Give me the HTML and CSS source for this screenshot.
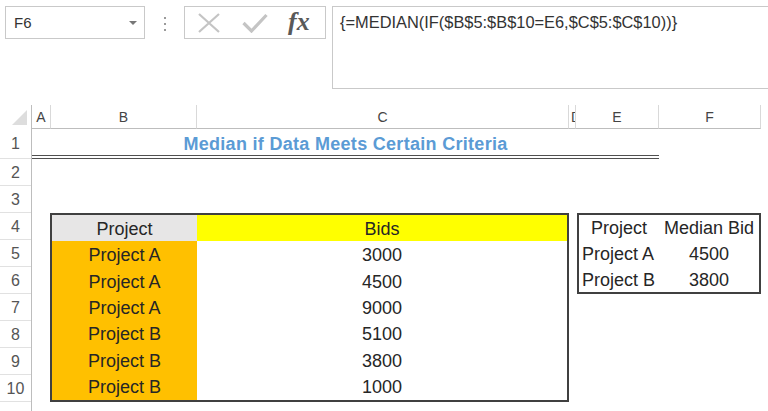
FILE: index.html
```html
<!DOCTYPE html>
<html>
<head>
<meta charset="utf-8">
<link rel="stylesheet" href="styles.css">
</head>
<body>
<div class="topbar">
  <div class="namebox"><span class="cellref">F6</span><span class="caret"></span></div>
  <div class="grip"><i></i><i></i><i></i></div>
  <div class="fbuttons">
    <svg class="ico-x" width="22" height="20" viewBox="0 0 22 20"><path d="M1 1 L21 19 M21 1 L1 19" stroke="#c4c4c4" stroke-width="2.2" fill="none"/></svg>
    <svg class="ico-check" width="26" height="20" viewBox="0 0 26 20"><path d="M1.5 10 L9.5 18 L24.5 2" stroke="#c4c4c4" stroke-width="3.2" fill="none"/></svg>
    <span class="fx">fx</span>
  </div>
  <div class="formula">{=MEDIAN(IF($B$5:$B$10=E6,$C$5:$C$10))}</div>
</div>
<div class="sheet">
  <div class="colheads">
    <div class="corner"><span class="tri"></span></div>
    <div class="ch w-a">A</div>
    <div class="ch w-b">B</div>
    <div class="ch w-c">C</div>
    <div class="ch w-d">D</div>
    <div class="ch w-e">E</div>
    <div class="ch w-f">F</div>
  </div>
  <div class="body">
    <div class="rowheads">
      <div class="rh first">1</div>
      <div class="rh">2</div>
      <div class="rh">3</div>
      <div class="rh">4</div>
      <div class="rh">5</div>
      <div class="rh">6</div>
      <div class="rh">7</div>
      <div class="rh">8</div>
      <div class="rh">9</div>
      <div class="rh">10</div>
      <div class="rh"></div>
    </div>
    <div class="cells">
      <div class="title">Median if Data Meets Certain Criteria</div>
      <div class="datatable">
        <div class="c head-grey">Project</div>
        <div class="c head-yellow">Bids</div>
        <div class="c orange">Project A</div><div class="c">3000</div>
        <div class="c orange">Project A</div><div class="c">4500</div>
        <div class="c orange">Project A</div><div class="c">9000</div>
        <div class="c orange">Project B</div><div class="c">5100</div>
        <div class="c orange">Project B</div><div class="c">3800</div>
        <div class="c orange">Project B</div><div class="c">1000</div>
      </div>
      <div class="summary">
        <div class="c">Project</div>
        <div class="c">Median Bid</div>
        <div class="c left">Project A</div><div class="c">4500</div>
        <div class="c left">Project B</div><div class="c">3800</div>
      </div>
    </div>
  </div>
</div>
</body>
</html>
```
FILE: styles.css
```css
html, body {
  margin: 0;
  padding: 0;
  background: #ffffff;
}
body {
  width: 768px;
  height: 411px;
  overflow: hidden;
  font-family: "Liberation Sans", Arial, sans-serif;
  color: #262626;
}

/* ---------- formula bar ---------- */
.topbar {
  display: flex;
  align-items: flex-start;
  height: 105px;
  padding: 6px 0 0 5px;
  box-sizing: border-box;
}
.namebox {
  width: 140px;
  height: 33px;
  box-sizing: border-box;
  border: 1px solid #c9c9c9;
  display: flex;
  align-items: center;
  justify-content: space-between;
  padding: 0 7px 0 8px;
  font-size: 15px;
  color: #333;
}
.caret {
  width: 0;
  height: 0;
  border-left: 4px solid transparent;
  border-right: 4px solid transparent;
  border-top: 4px solid #777;
}
.grip {
  width: 39px;
  display: flex;
  flex-direction: column;
  align-items: center;
  gap: 4px;
  padding-top: 11px;
}
.grip i {
  display: block;
  width: 2px;
  height: 2px;
  background: #9a9a9a;
}
.fbuttons {
  width: 142px;
  height: 33px;
  box-sizing: border-box;
  border: 1px solid #c9c9c9;
  display: flex;
  align-items: center;
  padding-left: 13px;
}
.ico-x { margin-right: 22px; }
.ico-check { margin-right: 20px; }
.fx {
  font-family: "Liberation Serif", "DejaVu Serif", serif;
  font-style: italic;
  font-weight: bold;
  font-size: 26px;
  color: #595959;
  line-height: 1;
  margin-top: -2px;
}
.formula {
  flex: 1;
  margin-left: 6px;
  height: 83px;
  box-sizing: border-box;
  border: 1px solid #c9c9c9;
  border-right: none;
  padding: 6px 0 0 7px;
  font-size: 16.4px;
  color: #333;
  white-space: nowrap;
}

/* ---------- sheet headers ---------- */
.colheads {
  display: flex;
  height: 24px;
}
.corner {
  width: 32px;
  box-sizing: border-box;
  border-right: 1px solid #bdbdbd;
  display: flex;
  align-items: flex-end;
  padding: 0 0 4px 12px;
}
.tri {
  width: 0;
  height: 0;
  border-left: 15px solid transparent;
  border-bottom: 15px solid #dddddd;
}
.ch {
  box-sizing: border-box;
  border-right: 1px solid #d9d9d9;
  border-bottom: 1px solid #bdbdbd;
  display: flex;
  align-items: center;
  justify-content: center;
  font-size: 14px;
  color: #444;
  overflow: hidden;
}
.w-a { width: 19px; }
.w-b { width: 146px; }
.w-c { width: 372px; }
.w-d { width: 7px; justify-content: flex-start; padding-left: 2px; }
.w-e { width: 83px; }
.w-f { width: 102px; }

.body {
  display: flex;
}
.rowheads {
  width: 32px;
  box-sizing: border-box;
  border-right: 1px solid #bdbdbd;
  display: flex;
  flex-direction: column;
}
.rh {
  height: 27px;
  flex: none;
  box-sizing: border-box;
  border-bottom: 1px solid #e1e1e1;
  display: flex;
  align-items: center;
  justify-content: center;
  font-size: 16px;
  color: #555;
  padding-top: 1px;
}
.rh.first { height: 30px; }

/* ---------- cells ---------- */
.cells {
  display: grid;
  grid-template-columns: 19px 146px 372px 7px 83px 102px;
  grid-template-rows: 30px repeat(10, 27px);
}
.title {
  grid-column: 1 / 6;
  grid-row: 1;
  border-bottom: 4px double #505050;
  display: flex;
  align-items: center;
  justify-content: center;
  padding-top: 4px;
  font-weight: bold;
  font-size: 18px;
  letter-spacing: 0.3px;
  color: #5b9bd5;
}
.datatable {
  grid-column: 2 / 4;
  grid-row: 4 / 11;
  border: 2px solid #404040;
  margin-left: -1px;
  display: grid;
  grid-template-columns: 145px 1fr;
  grid-template-rows: repeat(7, 1fr);
}
.summary {
  grid-column: 5 / 7;
  grid-row: 4 / 7;
  border: 2px solid #404040;
  margin-left: 1px;
  display: grid;
  grid-template-columns: 80px 1fr;
  grid-template-rows: repeat(3, 1fr);
}
.c {
  display: flex;
  align-items: center;
  justify-content: center;
  padding-top: 2px;
  font-size: 18px;
  color: #262626;
  white-space: nowrap;
}
.c.left {
  justify-content: flex-start;
  padding-left: 3px;
}
.head-grey { background: #e7e6e6; }
.head-yellow { background: #ffff00; }
.orange { background: #ffc000; }
```
